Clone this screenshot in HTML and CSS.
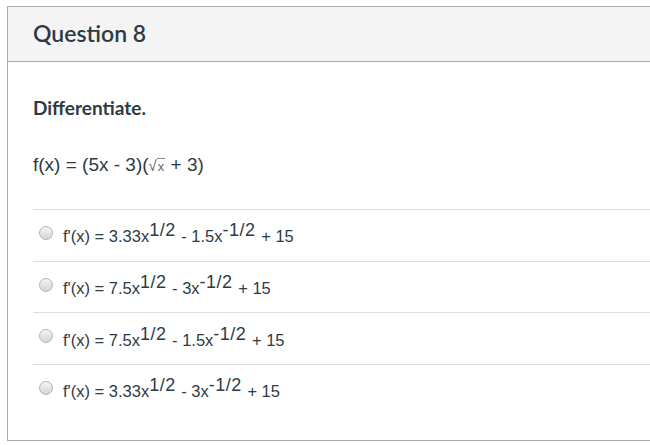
FILE: index.html
```html
<!DOCTYPE html>
<html>
<head>
<meta charset="utf-8">
<link rel="stylesheet" href="styles.css">
</head>
<body>
<div class="question">
  <div class="q-header">Question 8</div>
  <div class="q-body">
    <p class="prompt">Differentiate.</p>
    <p class="func">f(x) = (5x - 3)(<span class="sqrt"><span class="rad">√</span><span class="rx">x</span></span> + 3)</p>
    <div class="answers">
      <label class="answer"><span class="radio"></span><span class="atext">f'(x) = 3.33x<sup>1/2</sup> - 1.5x<sup>-1/2</sup> + 15</span></label>
      <label class="answer"><span class="radio"></span><span class="atext">f'(x) = 7.5x<sup>1/2</sup> - 3x<sup>-1/2</sup> + 15</span></label>
      <label class="answer"><span class="radio"></span><span class="atext">f'(x) = 7.5x<sup>1/2</sup> - 1.5x<sup>-1/2</sup> + 15</span></label>
      <label class="answer"><span class="radio"></span><span class="atext">f'(x) = 3.33x<sup>1/2</sup> - 3x<sup>-1/2</sup> + 15</span></label>
    </div>
  </div>
</div>
</body>
</html>
```
FILE: styles.css
```css
html, body {
  margin: 0;
  padding: 0;
  background: #fff;
}
body {
  padding: 6px 0 0 7px;
  color: #2d3b45;
}
.question {
  width: 660px;
  height: 435px;
  box-sizing: border-box;
  border: 1px solid #aaaaaa;
  border-right: none;
}
.q-header {
  height: 54px;
  background: #f4f4f4;
  border-bottom: 1px solid #aaaaaa;
  font-family: Lato, sans-serif;
  font-weight: 600;
  font-size: 23px;
  line-height: 52px;
  padding-left: 25px;
}
.q-body {
  padding: 0 0 0 25px;
}
.prompt {
  margin: 0;
  padding-top: 36px;
  font-family: Lato, sans-serif;
  font-weight: 700;
  font-size: 19px;
  line-height: 20px;
}
.func {
  margin: 0;
  padding-top: 37px;
  height: 20px;
  font-family: "Liberation Sans", Arial, sans-serif;
  font-size: 19px;
  line-height: 20px;
}
.sqrt {
  font-size: 13px;
  line-height: 1;
  color: #666;
  display: inline-block;
}
.rad {
  font-size: 15px;
}
.rx {
  border-top: 1px solid #888;
  padding: 0 1px;
}
.answers {
  margin-top: 34px;
}
.answer {
  display: flex;
  align-items: center;
  height: 51.7px;
  border-top: 1px solid #dddddd;
  padding-left: 6px;
  padding-top: 3px;
  box-sizing: border-box;
  font-family: "Liberation Sans", Arial, sans-serif;
  font-size: 16.5px;
}
.radio {
  width: 14px;
  height: 14px;
  border-radius: 50%;
  box-sizing: border-box;
  border: 1px solid #b4b4b4;
  background: linear-gradient(#f4f4f4, #d4d4d4);
  margin-right: 10px;
  margin-top: -8px;
}
.atext sup {
  font-size: 18px;
  vertical-align: 6px;
  line-height: 0;
  letter-spacing: 0.5px;
  margin-right: 1px;
}
```
